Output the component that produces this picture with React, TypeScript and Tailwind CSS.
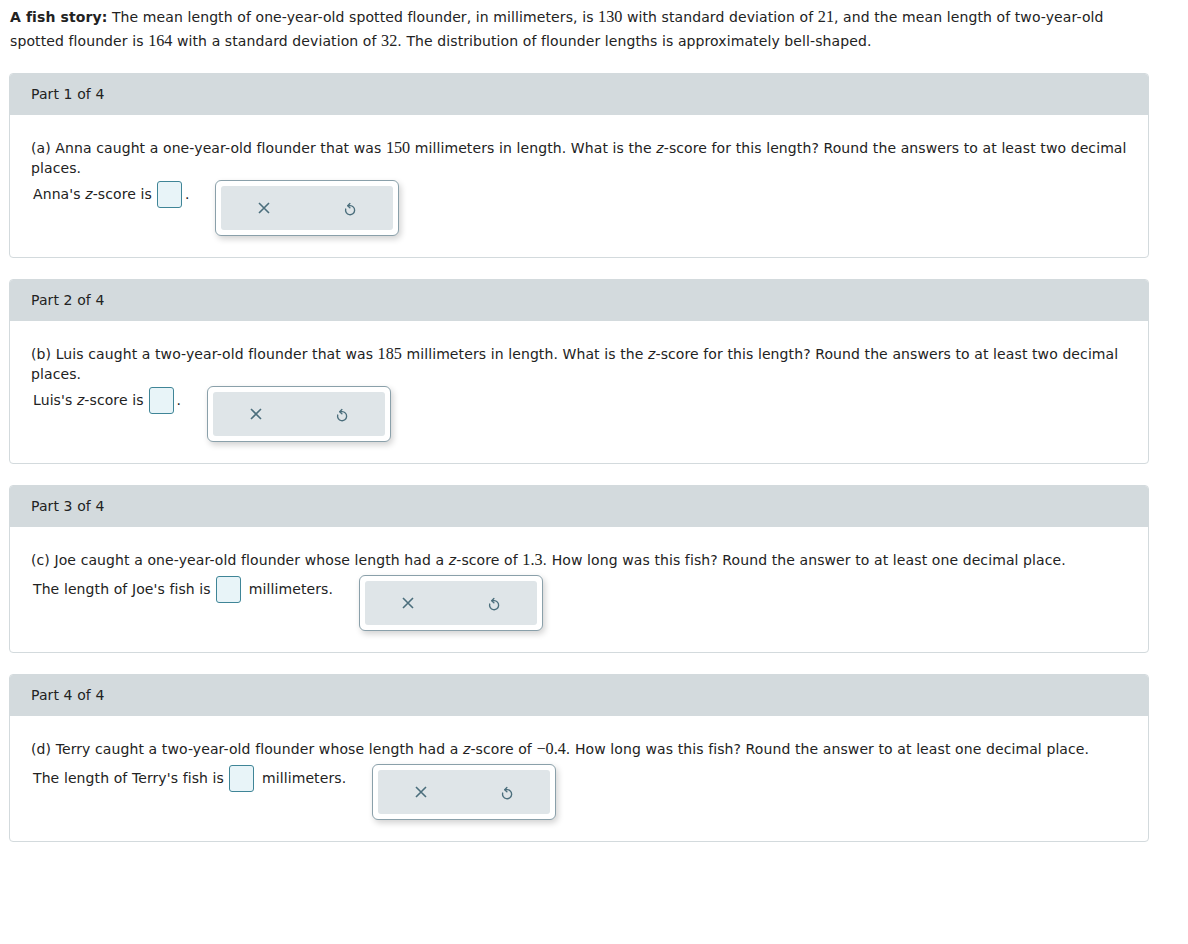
import type { ReactNode } from 'react'

const sans = { fontFamily: '"DejaVu Sans", Verdana, sans-serif', letterSpacing: '0.1px' }

function Num({ children }: { children: ReactNode }) {
    return <span className="font-['Liberation_Serif','Times_New_Roman',serif] text-[16.2px] leading-[1px] tracking-normal">{children}</span>
}

function Z() {
    return <i>z</i>
}

function XIcon() {
    return (
        <svg width="12" height="12" viewBox="0 0 12 12" fill="none" stroke="#4b6e7c" strokeWidth="1.6">
            <path d="M1 1 L11 11 M11 1 L1 11" />
        </svg>
    )
}

function UndoIcon() {
    return (
        <svg width="14" height="17" viewBox="0 0 12 15" fill="none" stroke="#4b6e7c" strokeWidth="1.2" strokeLinecap="round" strokeLinejoin="round">
            <path d="M2.2 8 A4 4 0 1 0 6.1 5 L4.2 5" />
            <path d="M5.9 3.1 L4 5 L5.9 6.9" />
        </svg>
    )
}

function Tools() {
    return (
        <div className="ml-[26px] -mt-[1px] p-[5px] rounded-[6px] border border-[#8aa0aa] bg-white shadow-[2px_3px_6px_rgba(0,0,0,0.18)]">
            <div className="flex w-[172px] h-[44px] rounded-[3px] bg-[#dfe5e8]">
                <button className="flex-1 flex items-center justify-center">
                    <XIcon />
                </button>
                <button className="flex-1 flex items-center justify-center">
                    <UndoIcon />
                </button>
            </div>
        </div>
    )
}

function Box() {
    return <span className="inline-block w-[25px] h-[27px] rounded-[3px] border border-[#3f8597] bg-[#e8f4f8]" />
}

type PartProps = {
    n: number
    question: ReactNode
    answer: ReactNode
    gap: string
}

function Part({ n, question, answer, gap }: PartProps) {
    return (
        <div className="w-[1140px] rounded-[4px] border border-[#d3dadd] overflow-hidden">
            <div className="h-[41px] bg-[#d3dadd] flex items-center px-[21px] text-[14px] text-[#222]">
                Part {n} of 4
            </div>
            <div className="pl-[21px] pr-[14px] pt-[23px] pb-[21px] text-[14px] leading-[20px] text-[#222]">
                <p>{question}</p>
                <div className={`flex items-start pl-[2px] ${gap}`}>{answer}</div>
            </div>
        </div>
    )
}

export default function App() {
    return (
        <div style={sans} className="bg-white min-h-[944px] px-[9px] pt-[5px] text-[#222]">
            <p className="pl-[1px] w-[1140px] text-[14px] leading-[24px]">
                <b>A fish story:</b> The mean length of one-year-old spotted flounder, in millimeters, is <Num>130</Num> with
                standard deviation of <Num>21</Num>, and the mean length of two-year-old spotted flounder is <Num>164</Num> with
                a standard deviation of <Num>32</Num>. The distribution of flounder lengths is approximately bell-shaped.
            </p>
            <div className="mt-[20px] flex flex-col gap-[21px]">
                <Part
                    n={1}
                    gap="mt-[3px]"
                    question={
                        <>
                            (a) Anna caught a one-year-old flounder that was <Num>150</Num> millimeters in length. What is the <Z />-score
                            for this length? Round the answers to at least two decimal places.
                        </>
                    }
                    answer={
                        <>
                            <span className="leading-[27px]">Anna's <Z />-score is</span>
                            <span className="ml-[5px]"><Box /></span>
                            <span className="ml-[3px] leading-[27px]">.</span>
                            <Tools />
                        </>
                    }
                />
                <Part
                    n={2}
                    gap="mt-[3px]"
                    question={
                        <>
                            (b) Luis caught a two-year-old flounder that was <Num>185</Num> millimeters in length. What is the <Z />-score
                            for this length? Round the answers to at least two decimal places.
                        </>
                    }
                    answer={
                        <>
                            <span className="leading-[27px]">Luis's <Z />-score is</span>
                            <span className="ml-[5px]"><Box /></span>
                            <span className="ml-[3px] leading-[27px]">.</span>
                            <Tools />
                        </>
                    }
                />
                <Part
                    n={3}
                    gap="mt-[6px]"
                    question={
                        <>
                            (c) Joe caught a one-year-old flounder whose length had a <Z />-score of <Num>1.3</Num>. How long was this
                            fish? Round the answer to at least one decimal place.
                        </>
                    }
                    answer={
                        <>
                            <span className="leading-[27px]">The length of Joe's fish is</span>
                            <span className="ml-[5px]"><Box /></span>
                            <span className="ml-[8px] leading-[27px]">millimeters.</span>
                            <Tools />
                        </>
                    }
                />
                <Part
                    n={4}
                    gap="mt-[6px]"
                    question={
                        <>
                            (d) Terry caught a two-year-old flounder whose length had a <Z />-score of <Num>−0.4</Num>. How long was
                            this fish? Round the answer to at least one decimal place.
                        </>
                    }
                    answer={
                        <>
                            <span className="leading-[27px]">The length of Terry's fish is</span>
                            <span className="ml-[5px]"><Box /></span>
                            <span className="ml-[8px] leading-[27px]">millimeters.</span>
                            <Tools />
                        </>
                    }
                />
            </div>
        </div>
    )
}
